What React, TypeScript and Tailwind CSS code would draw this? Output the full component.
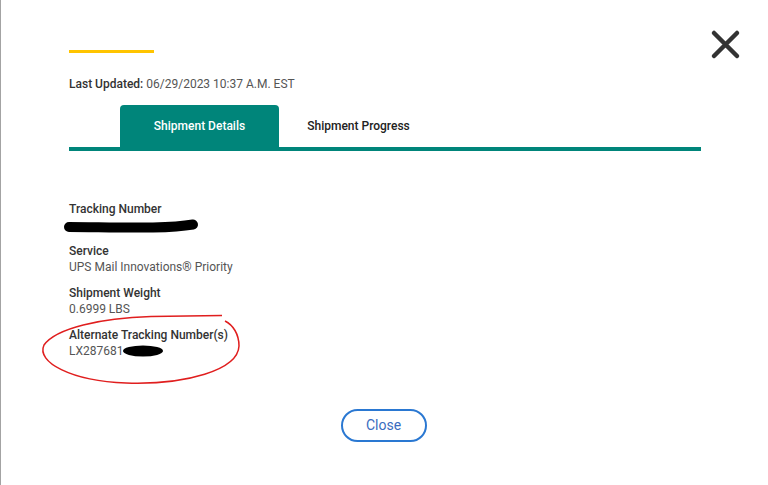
import React from 'react';

const Field: React.FC<{ label: string; children: React.ReactNode }> = ({ label, children }) => (
  <div className="flex flex-col">
    <span className="h-4 text-[12px] leading-4 font-medium text-[#333333]">{label}</span>
    <div className="h-4 text-[12px] leading-4 text-[#555555]">{children}</div>
  </div>
);

const App: React.FC = () => {
  return (
    <div
      className="relative w-[768px] h-[485px] overflow-hidden bg-white border-l border-[#a3a3a3]"
      style={{ fontFamily: 'Roboto, "Noto Sans", sans-serif' }}
    >
      {/* close icon */}
      <button className="absolute left-[709px] top-[29px] w-[31px] h-[31px] flex items-center justify-center">
        <svg width="31" height="31" viewBox="0 0 31 31">
          <path d="M4 4 L27 27 M27 4 L4 27" stroke="#333333" strokeWidth="4.5" strokeLinecap="round" />
        </svg>
      </button>

      <div className="pl-[68px] pr-[67px] pt-[50px]">
        <div className="w-[85px] h-[2.5px] bg-[#ffc400]" />
        <p className="mt-[23px] text-[12px] leading-4 text-[#555555]">
          <span className="font-medium text-[#333333]">Last Updated:</span> 06/29/2023 10:37 A.M. EST
        </p>

        {/* tabs */}
        <div className="mt-[13px] flex border-b-4 border-[#00857a] pl-[51px]">
          <div className="w-[159px] h-[42px] rounded-t-[4px] bg-[#00857a] flex items-center justify-center text-[12px] font-medium text-white">
            Shipment Details
          </div>
          <div className="w-[159px] h-[42px] flex items-center justify-center text-[12px] font-medium text-[#222222]">
            Shipment Progress
          </div>
        </div>

        <div className="mt-[50px] flex flex-col gap-[10px]">
          <Field label="Tracking Number">
            <svg width="140" height="16" viewBox="0 0 140 16" className="-ml-[6px]">
              <path
                d="M6 10 C30 10 60 11 90 10.5 C110 10 124 8.5 130 7.5"
                stroke="#000"
                strokeWidth="10"
                strokeLinecap="round"
                fill="none"
              />
            </svg>
          </Field>
          <Field label="Service">UPS Mail Innovations® Priority</Field>
          <Field label="Shipment Weight">0.6999 LBS</Field>
          <Field label="Alternate Tracking Number(s)">
            <span className="inline-flex items-center">
              LX287681
              <svg width="42" height="12" viewBox="0 0 42 12" className="-ml-[1px]">
                <ellipse cx="21" cy="6" rx="20" ry="5.5" fill="#000" />
              </svg>
            </span>
          </Field>
        </div>

        <div className="mt-[50px] flex justify-center pr-[3px]">
          <button className="w-[86px] h-[33px] rounded-full border-2 border-[#2a78d2] text-[14px] text-[#3a6cc0]">
            Close
          </button>
        </div>
      </div>

      {/* red annotation */}
      <svg className="absolute inset-0 pointer-events-none" width="768" height="485" viewBox="0 0 768 485">
        <path
          d="M221 315.5 L150 316.5 C100 318 55 328 43 345 C35 362 70 381 125 383 C185 385 237 370 238 346 C238 334 232 325 224 321"
          stroke="#e01e1e"
          strokeWidth="1.5"
          fill="none"
        />
      </svg>
    </div>
  );
};

export default App;
